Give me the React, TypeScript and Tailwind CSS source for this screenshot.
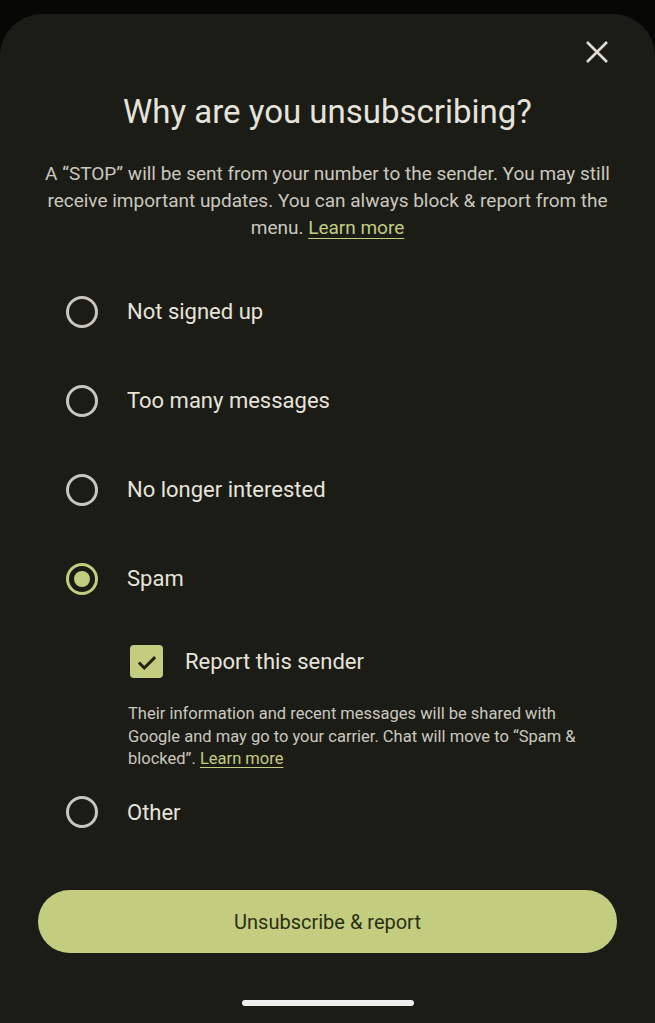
import { useState } from "react";

const options = [
	"Not signed up",
	"Too many messages",
	"No longer interested",
	"Spam",
	"Other",
];

const font = { fontFamily: "Roboto, 'Noto Sans', sans-serif" };

function Radio({ checked }: { checked: boolean }) {
	return (
		<span
			className={`flex items-center justify-center w-[32px] h-[32px] rounded-full border-[3px] ${
				checked ? "border-[#c3cd80]" : "border-[#c9c7bd]"
			}`}
		>
			{checked && <span className="w-[16px] h-[16px] rounded-full bg-[#c3cd80]" />}
		</span>
	);
}

export default function App() {
	const [selected, setSelected] = useState("Spam");
	const [report, setReport] = useState(true);

	return (
		<div className="w-[655px] h-[1023px] bg-[#070805] pt-[14px] overflow-hidden" style={font}>
			<div className="h-full bg-[#1c1c17] rounded-t-[42px] flex flex-col">
				<div className="flex justify-end pt-[24px] pr-[44px]">
					<button type="button" className="w-[28px] h-[28px] flex items-center justify-center">
						<svg width="24" height="24" viewBox="0 0 24 24" fill="none">
							<path d="M2 2L22 22M22 2L2 22" stroke="#dedcd2" strokeWidth="2.6" />
						</svg>
					</button>
				</div>

				<h1 className="mt-[26px] text-center text-[33px] leading-[40px] text-[#e6e3da]">
					Why are you unsubscribing?
				</h1>

				<p className="mt-[28px] px-[38px] text-center text-[19px] leading-[27px] text-[#cac8be]">
					A “STOP” will be sent from your number to the sender. You may still receive important
					updates. You can always block &amp; report from the menu.{" "}
					<span className="text-[#c3cd80] underline underline-offset-[4px]">Learn more</span>
				</p>

				<div className="mt-[26px] flex flex-col">
					{options.map((opt) => (
						<div key={opt}>
							<button
								type="button"
								onClick={() => setSelected(opt)}
								className="w-full h-[89px] flex items-center pl-[66px]"
							>
								<Radio checked={selected === opt} />
								<span className="ml-[29px] text-[22px] text-[#e6e3da]">{opt}</span>
							</button>
							{opt === "Spam" && (
								<div className="pl-[128px] pr-[66px] mt-[22px] -mb-[3px]">
									<button
										type="button"
										onClick={() => setReport(!report)}
										className="flex items-center pl-[2px]"
									>
										<span className="w-[33px] h-[33px] rounded-[4px] bg-[#c3cd80] flex items-center justify-center">
											{report && (
												<svg width="26" height="26" viewBox="0 0 24 24" fill="none">
													<path
														d="M4.5 12.5L9.5 17.5L19.5 7.5"
														stroke="#1f240b"
														strokeWidth="2.8"
													/>
												</svg>
											)}
										</span>
										<span className="ml-[22px] text-[22px] text-[#e6e3da]">Report this sender</span>
									</button>
									<p className="mt-[25px] text-[16.5px] leading-[22.5px] text-[#cac8be]">
										Their information and recent messages will be shared with Google and may go to
										your carrier. Chat will move to “Spam &amp; blocked”.{" "}
										<span className="text-[#c3cd80] underline underline-offset-[3px]">Learn more</span>
									</p>
								</div>
							)}
						</div>
					))}
				</div>

				<div className="flex-1" />

				<div className="px-[38px]">
					<button
						type="button"
						className="w-full h-[63px] rounded-full bg-[#c3cd80] text-[20px] text-[#2a2f10]"
					>
						Unsubscribe &amp; report
					</button>
				</div>

				<div className="flex justify-center mt-[47px] mb-[17px]">
					<div className="w-[172px] h-[6px] rounded-full bg-[#efefef]" />
				</div>
			</div>
		</div>
	);
}
